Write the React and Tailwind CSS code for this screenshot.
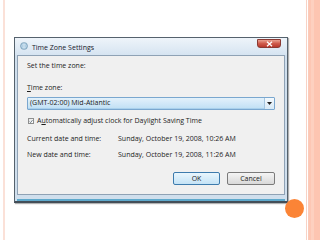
import React from "react";

const font = { fontFamily: '"Open Sans", "Noto Sans", "DejaVu Sans", sans-serif' };

function Row({ label, value, className = "" }) {
  return (
    <div className={"flex leading-[10px] h-[10px] " + className}>
      <div className="w-[91px] shrink-0">{label}</div>
      <div>{value}</div>
    </div>
  );
}

export default function App() {
  return (
    <div className="relative w-[320px] h-[240px] bg-white overflow-hidden flex text-[7px] text-[#1c1c1c]" style={font}>
      <div className="w-[3px] shrink-0" />
      <div className="w-[2px] shrink-0 bg-[#fbe1d8]" />
      <div className="w-[301px] shrink-0 pl-[9px] pt-[37px]">
        <div className="w-[274px] h-[166px] flex flex-col border border-[#55626d] border-b-[2px] border-b-[#434e58] bg-[#d0dfed] shadow-[1px_1px_1px_rgba(0,0,0,0.3)]">
          <div className="h-[17px] shrink-0 flex items-start bg-gradient-to-b from-[#eef4fa] to-[#d6e4f1]">
            <div className="mt-[4px] ml-[5px] w-[8px] h-[8px]">
              <svg width="8" height="8" viewBox="0 0 8 8">
                <circle cx="4" cy="4" r="3.5" fill="#9fc3dc" stroke="#6f93ad" strokeWidth="0.6" />
                <path d="M1 4h6M4 0.5v7M2 2c1.2 1 2.8 1 4 0M2 6c1.2-1 2.8-1 4 0" stroke="#e8f2f9" strokeWidth="0.5" fill="none" />
              </svg>
            </div>
            <div className="ml-[4px] mt-[5px] leading-[9px] text-[7px] text-[#17212b]">Time Zone Settings</div>
            <div className="ml-auto mr-[6px] mt-[1px] w-[24px] h-[9px] rounded-b-[3px] border border-[#8a3a33] bg-gradient-to-b from-[#e9a192] via-[#cf5b4b] to-[#b8372b] flex items-center justify-center">
              <svg width="7" height="6" viewBox="0 0 7 6">
                <path d="M1 0.8L6 5.2M6 0.8L1 5.2" stroke="#fff" strokeWidth="1.3" />
              </svg>
            </div>
          </div>
          <div className="mx-[2px] h-[140px] shrink-0 border border-[#8fa2b5] bg-[#f0f0f0] pl-[9px] pr-[9px] pt-[5px] flex flex-col">
            <div className="leading-[10px] h-[10px]">Set the time zone:</div>
            <div className="mt-[12px] leading-[10px] h-[10px]">
              <span className="underline">T</span>ime zone:
            </div>
            <div className="mt-[4px] h-[13px] flex border border-[#7aa7cf] rounded-[1px] bg-white">
              <div className="flex-1 flex items-center pl-[2px] bg-gradient-to-b from-[#e3f1fb] to-[#c3e1f5] border-b border-b-[#a9d0ec]">
                (GMT-02:00) Mid-Atlantic
              </div>
              <div className="w-[10px] flex items-center justify-center bg-gradient-to-b from-[#f4f9fd] to-[#d7e9f6] border-l border-l-[#a6c6e0]">
                <svg width="5" height="3" viewBox="0 0 5 3">
                  <path d="M0 0h5L2.5 3z" fill="#222" />
                </svg>
              </div>
            </div>
            <div className="mt-[6px] flex items-center leading-[10px] h-[10px]">
              <div className="ml-[1px] w-[6px] h-[6px] border border-[#8e8f8f] bg-gradient-to-br from-[#e6e6e6] to-[#ffffff] flex items-center justify-center">
                <svg width="5" height="5" viewBox="0 0 5 5">
                  <path d="M0.7 2.6L2 3.9L4.4 0.8" stroke="#4a5a6a" strokeWidth="0.9" fill="none" />
                </svg>
              </div>
              <div className="ml-[3px]">
                A<span className="underline">u</span>tomatically adjust clock for Daylight Saving Time
              </div>
            </div>
            <Row className="mt-[8px]" label="Current date and time:" value="Sunday, October 19, 2008, 10:26 AM" />
            <Row className="mt-[6px]" label="New date and time:" value="Sunday, October 19, 2008, 11:26 AM" />
            <div className="mt-[12px] flex justify-end gap-[7px]">
              <div className="w-[47px] h-[13px] rounded-[2px] border border-[#3d7bad] bg-gradient-to-b from-[#eaf6fd] to-[#c4e3f6] flex items-center justify-center leading-none">
                OK
              </div>
              <div className="w-[48px] h-[13px] rounded-[2px] border border-[#7b7b7b] bg-gradient-to-b from-[#f4f4f4] to-[#d9d9d9] flex items-center justify-center leading-none">
                Cancel
              </div>
            </div>
          </div>
          <div className="flex-1 mx-[2px] border-b-[2px] border-b-[#5ea9cc]" />
        </div>
      </div>
      <div className="w-[1px] shrink-0 bg-[#f8d2c5]" />
      <div className="w-[1px] shrink-0 bg-white" />
      <div className="w-[1px] shrink-0 bg-[#f9cbbb]" />
      <div className="w-[2px] shrink-0 bg-[#fdc7b4]" />
      <div className="w-[3px] shrink-0 bg-[#fdd0bf]" />
      <div className="flex-1 bg-[#fdc5b1]" />
      <div className="absolute left-[285px] top-[199px] w-[19px] h-[19px] rounded-full bg-[#fb8436]" />
    </div>
  );
}
